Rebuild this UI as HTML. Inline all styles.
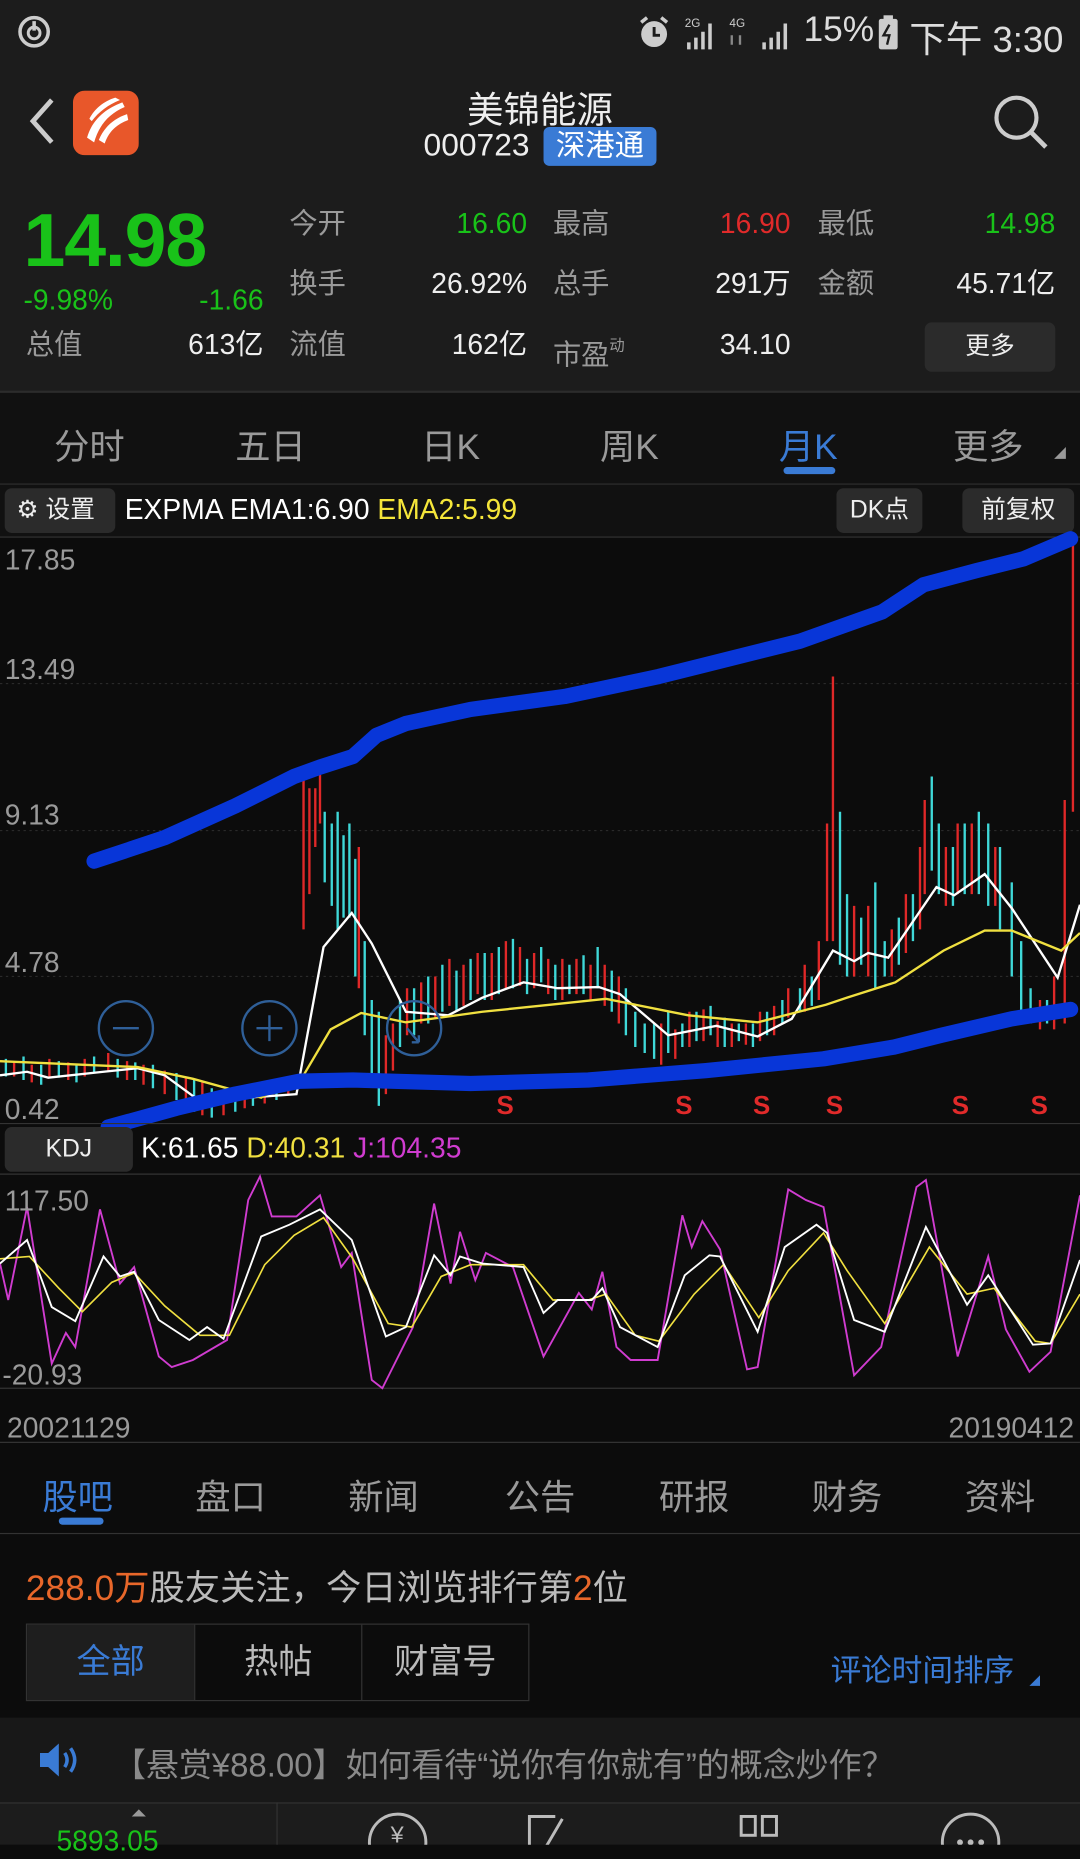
<!DOCTYPE html>
<html><head><meta charset="utf-8">
<style>
*{margin:0;padding:0;box-sizing:border-box}
html,body{width:1080px;height:1844px;overflow:hidden;background:#0c0c0c}
#w{position:absolute;left:0;top:0;width:918px;height:1568px;transform:scale(1.17647);transform-origin:0 0;font-family:"Liberation Sans","Noto Sans CJK SC",sans-serif;color:#ddd;background:#0c0c0c}
.a{position:absolute;white-space:nowrap}
.g{color:#19c219}.r{color:#e02a2a}.lb{color:#9a9a9a}.wt{color:#eee}
.q{font-size:24px;line-height:28px}
.btn{position:absolute;background:#2b2b2b;border-radius:6px;color:#eee;font-size:21px;text-align:center}
</style></head><body><div id="w">
<div class="a" style="left:0;top:0;width:918px;height:332px;background:#1c1c1c"></div>
<div class="a" style="left:0;top:332px;width:918px;height:2px;background:#2c2c2c"></div>
<svg class="a" style="left:14px;top:12px" width="30" height="30" viewBox="0 0 30 30"><circle cx="15" cy="15" r="12" fill="none" stroke="#ccc" stroke-width="3"/><circle cx="15" cy="16" r="5" fill="none" stroke="#ccc" stroke-width="2.5"/><path d="M15 6v8" stroke="#ccc" stroke-width="3"/></svg>
<svg class="a" style="left:540px;top:12px" width="140" height="32" viewBox="0 0 140 32"><circle cx="16" cy="17" r="11" fill="#ccc"/><path d="M16 11v7h5" stroke="#1c1c1c" stroke-width="2.5" fill="none"/><path d="M5 7l5-4M27 7l-5-4" stroke="#ccc" stroke-width="3"/><text x="42" y="11" font-size="10" fill="#ccc" font-family="Liberation Sans">2G</text><path d="M44 30h3v-6h-3zM50 30h3v-10h-3zM56 30h3v-15h-3zM62 30h3v-22h-3z" fill="#ccc"/><text x="80" y="11" font-size="10" fill="#ccc" font-family="Liberation Sans">4G</text><path d="M82 18v8M89 18v8" stroke="#888" stroke-width="2"/><path d="M108 30h3v-6h-3zM114 30h3v-10h-3zM120 30h3v-15h-3zM126 30h3v-22h-3z" fill="#ccc"/></svg>
<div class="a" style="left:683px;top:9px;font-size:30px;color:#ddd">15%</div>
<svg class="a" style="left:745px;top:12px" width="20" height="32"><rect x="2" y="4" width="16" height="26" rx="2" fill="#ccc"/><rect x="6" y="1" width="8" height="4" fill="#ccc"/><path d="M11 9l-5 9h5l-2 8" stroke="#1c1c1c" stroke-width="2" fill="none"/></svg>
<div class="a" style="left:773px;top:8px;font-size:31px;color:#ddd">下午 3:30</div>
<svg class="a" style="left:20px;top:82px" width="30" height="42"><path d="M24 3L8 21l16 18" stroke="#ccc" stroke-width="4" fill="none"/></svg>
<svg class="a" style="left:62px;top:77px" width="56" height="55" viewBox="0 0 56 55"><rect width="56" height="55" rx="10" fill="#e8572a"/><path d="M12 40C16 26 26 16 42 10L44 14C30 20 22 30 18 44Z" fill="#fff"/><path d="M22 42C26 32 34 24 46 20L47 25C36 29 30 36 27 45Z" fill="#fff"/><path d="M16 26C22 18 30 12 40 8L36 6C26 9 18 16 14 24Z" fill="#fff"/></svg>
<div class="a wt" style="left:0;width:918px;text-align:center;top:68px;font-size:31px">美锦能源</div>
<div class="a wt" style="left:360px;top:108px;font-size:27px">000723</div>
<div class="a" style="left:462px;top:108px;width:96px;height:33px;background:#3a7bd5;border-radius:5px;color:#fff;font-size:25px;text-align:center;line-height:33px">深港通</div>
<svg class="a" style="left:842px;top:78px" width="52" height="52"><circle cx="22" cy="22" r="17" fill="none" stroke="#ccc" stroke-width="3.5"/><path d="M34 34l13 13" stroke="#ccc" stroke-width="4"/></svg>
<div class="a g" style="left:20px;top:167px;font-size:64px;font-weight:bold;letter-spacing:-1px">14.98</div>
<div class="a g q" style="left:20px;top:242px">-9.98%</div>
<div class="a g q" style="left:100px;width:124px;text-align:right;top:242px">-1.66</div>
<div class="a lb q" style="left:22px;top:280px">总值</div>
<div class="a wt q" style="left:100px;width:124px;text-align:right;top:280px">613亿</div>
<div class="a lb q" style="left:246px;top:177px">今开</div><div class="a g q" style="left:300px;width:148px;text-align:right;top:177px">16.60</div>
<div class="a lb q" style="left:470px;top:177px">最高</div><div class="a r q" style="left:530px;width:142px;text-align:right;top:177px">16.90</div>
<div class="a lb q" style="left:695px;top:177px">最低</div><div class="a g q" style="left:750px;width:147px;text-align:right;top:177px">14.98</div>
<div class="a lb q" style="left:246px;top:228px">换手</div><div class="a wt q" style="left:300px;width:148px;text-align:right;top:228px">26.92%</div>
<div class="a lb q" style="left:470px;top:228px">总手</div><div class="a wt q" style="left:530px;width:142px;text-align:right;top:228px">291万</div>
<div class="a lb q" style="left:695px;top:228px">金额</div><div class="a wt q" style="left:750px;width:147px;text-align:right;top:228px">45.71亿</div>
<div class="a lb q" style="left:246px;top:280px">流值</div><div class="a wt q" style="left:300px;width:148px;text-align:right;top:280px">162亿</div>
<div class="a lb q" style="left:470px;top:280px">市盈<sup style="font-size:13px;vertical-align:12px">动</sup></div><div class="a wt q" style="left:530px;width:142px;text-align:right;top:280px">34.10</div>
<div class="btn" style="left:786px;top:274px;width:111px;height:42px;line-height:42px">更多</div>
<div class="a" style="left:0;top:334px;width:918px;height:78px;background:#111"></div>
<div class="a" style="left:0;top:411px;width:918px;height:1px;background:#333"></div>
<div class="a lb" style="left:46px;top:355px;font-size:30px">分时</div>
<div class="a lb" style="left:200px;top:355px;font-size:30px">五日</div>
<div class="a lb" style="left:358px;top:355px;font-size:30px">日K</div>
<div class="a lb" style="left:510px;top:355px;font-size:30px">周K</div>
<div class="a" style="left:662px;top:355px;font-size:30px;color:#3a7bd5">月K</div>
<div class="a" style="left:666px;top:397px;width:44px;height:6px;border-radius:3px;background:#3a7bd5"></div>
<div class="a lb" style="left:810px;top:355px;font-size:30px">更多</div>
<div class="a" style="left:896px;top:380px;width:0;height:0;border-left:10px solid transparent;border-bottom:10px solid #999"></div>
<div class="a" style="left:0;top:412px;width:918px;height:44px;background:#111"></div>
<div class="btn" style="left:4px;top:415px;width:94px;height:38px;line-height:38px;text-align:left;padding-left:10px">⚙ 设置</div>
<div class="a" style="left:106px;top:420px;font-size:24px;color:#fff">EXPMA EMA1:6.90 <span style="color:#f5e63a">EMA2:5.99</span></div>
<div class="btn" style="left:711px;top:415px;width:73px;height:38px;line-height:38px">DK点</div>
<div class="btn" style="left:818px;top:415px;width:95px;height:38px;line-height:38px">前复权</div>
<div class="a" style="left:0;top:456px;width:918px;height:1px;background:#333"></div>
<svg class="a" style="left:0;top:0" width="918" height="1568">
<g stroke="#2a2a2a" stroke-dasharray="2 3" stroke-width="1"><path d="M0 581H918M0 706H918M0 830H918"/></g>
<g stroke="#3fd8d8" stroke-width="2" fill="none"><path d="M5 900V915M20 898V918M35 905V922M50 902V916M65 905V920M80 898V912M100 900V916M115 903V918M130 905V925M150 912V935M165 918V945M180 925V950M200 930V945M215 928V940M235 922V935M276 690V750M282 700V770M287 690V790M292 710V780M297 700V780M302 730V830M310 800V880M316 850V920M322 860V940M340 850V890M352 840V880M364 830V870M376 820V860M388 825V860M400 815V850M412 810V850M424 805V845M436 798V840M448 815V845M460 805V835M472 820V850M484 820V845M496 812V845M508 805V840M520 825V860M532 840V880M540 860V890M548 870V895M556 870V900M568 860V895M580 870V890M592 860V885M604 855V880M616 865V890M628 870V885M640 870V890M652 860V880M665 850V870M680 840V860M690 830V855M714 690V820M720 760V830M732 780V820M744 750V840M752 800V830M764 780V820M776 760V800M792 660V740M798 700V760M810 720V770M820 700V760M832 690V760M840 700V770M850 720V790M860 750V830M868 800V860M876 840V870M890 850V870"/></g>
<g stroke="#e02828" stroke-width="2" fill="none"><path d="M12 902V915M27 905V920M42 900V915M58 903V918M72 900V915M92 895V910M108 902V918M122 905V922M140 910V930M158 915V940M172 920V948M190 930V948M208 930V942M225 925V938M245 920V930M258 660V790M263 670V760M268 670V720M272 650V700M305 720V840M328 880V930M334 870V910M346 840V880M358 835V870M370 830V865M382 815V855M394 820V855M406 810V845M418 810V850M430 800V840M442 805V838M454 810V840M466 815V845M478 815V850M490 815V845M502 820V850M514 820V855M526 830V870M562 870V905M574 875V900M586 860V890M598 858V885M610 868V890M622 870V890M634 870V888M646 860V885M658 855V880M670 840V865M684 820V860M696 800V850M703 700V800M708 575V800M726 770V830M738 770V830M758 790V830M770 760V810M782 720V790M786 680V760M804 720V770M814 700V760M826 700V760M846 720V770M884 850V875M896 830V875M905 680V870M912 460V690"/></g>
<polyline fill="none" stroke="#fff" stroke-width="2" points="0,914 23,911 41,916 88,911 117,908 140,914 170,936 252,930 275,805 299,776 316,802 345,860 381,863 410,848 445,835 474,840 509,839 527,845 568,880 609,872 644,881 673,866 708,808 726,817 738,810 755,814 796,754 811,761 837,743 860,772 899,831 918,769"/>
<polyline fill="none" stroke="#f0e040" stroke-width="2" points="0,902 117,907 164,917 222,933 258,914 281,875 307,861 345,869 410,860 468,854 515,849 585,863 644,869 702,854 720,848 761,835 802,808 837,791 860,791 902,808 918,793"/>
<polyline fill="none" stroke="#0836d8" stroke-width="13" stroke-linecap="round" stroke-linejoin="round" points="80,732 140,712 200,685 250,660 272,652 300,643 320,625 345,615 400,603 480,592 560,575 600,565 680,545 750,520 785,497 830,485 870,475 910,458"/>
<polyline fill="none" stroke="#0836d8" stroke-width="13" stroke-linecap="round" stroke-linejoin="round" points="92,958 150,942 200,930 255,919 300,918 400,921 500,918 600,910 700,900 760,890 800,880 860,866 910,858"/>
<g fill="none" stroke="#2f5f98" stroke-width="2"><circle cx="107" cy="874" r="23"/><circle cx="229" cy="874" r="23"/><circle cx="352" cy="874" r="23"/><path d="M96 874H118M218 874H240M229 863V885M346 874l10 12M356 886h-6M356 886v-6"/></g>
<g fill="#e02a2a" font-size="22" font-weight="bold" font-family="Liberation Sans"><text x="422" y="947">S</text><text x="574" y="947">S</text><text x="640" y="947">S</text><text x="702" y="947">S</text><text x="809" y="947">S</text><text x="876" y="947">S</text></g>
<g fill="#9a9a9a" font-size="24" font-family="Liberation Sans"><text x="4" y="484">17.85</text><text x="4" y="577">13.49</text><text x="4" y="701">9.13</text><text x="4" y="826">4.78</text><text x="4" y="951">0.42</text></g>
<path d="M0 955H918M0 998H918M0 1180H918M0 1226H918" stroke="#333" stroke-width="1"/>
<polyline fill="none" stroke="#d03cd0" stroke-width="1.6" points="0,1074 7,1105 23,1026 44,1159 56,1133 64,1145 85,1028 102,1091 114,1077 135,1153 146,1162 164,1156 193,1139 211,1020 221,1000 231,1034 252,1034 272,1016 290,1077 299,1065 316,1173 325,1180 351,1128 369,1023 383,1091 391,1047 404,1088 413,1065 436,1077 462,1153 492,1099 503,1113 512,1081 524,1145 536,1156 559,1156 580,1033 588,1060 597,1038 612,1062 635,1164 644,1162 670,1011 685,1020 700,1026 726,1169 749,1145 779,1009 787,1003 814,1153 840,1068 855,1130 875,1166 893,1149 918,1016"/>
<polyline fill="none" stroke="#f0e040" stroke-width="1.4" points="0,1070 25,1068 50,1095 70,1115 95,1090 114,1082 140,1110 170,1135 195,1135 225,1075 250,1050 275,1035 300,1070 330,1125 350,1128 375,1085 400,1075 445,1075 470,1105 500,1105 515,1100 540,1135 560,1140 590,1100 615,1075 645,1120 670,1080 700,1048 720,1080 752,1125 790,1060 822,1100 845,1095 880,1140 893,1142 918,1100"/>
<polyline fill="none" stroke="#fff" stroke-width="1.6" points="0,1074 23,1054 44,1111 64,1123 88,1068 102,1085 114,1081 135,1122 161,1139 176,1128 190,1138 222,1051 246,1041 272,1028 299,1054 328,1136 345,1128 369,1067 383,1084 391,1068 410,1074 445,1077 462,1116 474,1105 503,1105 512,1095 527,1128 559,1145 582,1084 603,1067 612,1068 644,1132 667,1060 694,1041 703,1048 726,1122 752,1132 787,1043 822,1109 840,1084 878,1143 893,1142 918,1071"/>
<g fill="#9a9a9a" font-size="24" font-family="Liberation Sans"><text x="4" y="1029">117.50</text><text x="2" y="1177">-20.93</text><text x="6" y="1222">20021129</text><text x="913" y="1222" text-anchor="end">20190412</text></g>
</svg>
<div class="btn" style="left:4px;top:958px;width:109px;height:38px;line-height:38px">KDJ</div>
<div class="a" style="left:120px;top:963px;font-size:24px;color:#fff">K:61.65 <span style="color:#f0e040">D:40.31</span> <span style="color:#d03cd0">J:104.35</span></div>
<div class="a" style="left:0;top:1303px;width:918px;height:1px;background:#333"></div>
<div class="a" style="left:36px;top:1248px;font-size:30px;color:#3a7bd5">股吧</div>
<div class="a" style="left:50px;top:1290px;width:38px;height:6px;border-radius:3px;background:#3a7bd5"></div>
<div class="a lb" style="left:166px;top:1248px;font-size:30px">盘口</div>
<div class="a lb" style="left:296px;top:1248px;font-size:30px">新闻</div>
<div class="a lb" style="left:429px;top:1248px;font-size:30px">公告</div>
<div class="a lb" style="left:560px;top:1248px;font-size:30px">研报</div>
<div class="a lb" style="left:690px;top:1248px;font-size:30px">财务</div>
<div class="a lb" style="left:820px;top:1248px;font-size:30px">资料</div>
<div class="a" style="left:22px;top:1325px;font-size:30px;color:#bbb"><span style="color:#e8672a">288.0万</span>股友关注，今日浏览排行第<span style="color:#e8672a">2</span>位</div>
<div class="a" style="left:22px;top:1380px;width:428px;height:66px;border:1px solid #333"></div>
<div class="a" style="left:23px;top:1381px;width:142px;height:64px;background:#1e1e1e;color:#3a7bd5;font-size:29px;text-align:center;line-height:64px">全部</div>
<div class="a" style="left:165px;top:1381px;width:142px;height:64px;border-left:1px solid #333;color:#bbb;font-size:29px;text-align:center;line-height:64px">热帖</div>
<div class="a" style="left:307px;top:1381px;width:142px;height:64px;border-left:1px solid #333;color:#bbb;font-size:29px;text-align:center;line-height:64px">财富号</div>
<div class="a" style="left:706px;top:1400px;font-size:26px;color:#3a7bd5">评论时间排序</div>
<div class="a" style="left:875px;top:1424px;width:0;height:0;border-left:9px solid transparent;border-bottom:9px solid #3a7bd5"></div>
<div class="a" style="left:0;top:1460px;width:918px;height:72px;background:#181818"></div>
<svg class="a" style="left:32px;top:1480px" width="36" height="32"><path d="M2 10h7l9-8v28l-9-8H2z" fill="#3a7bd5"/><path d="M23 10q4 6 0 12M28 6q7 10 0 20" stroke="#3a7bd5" stroke-width="3" fill="none"/></svg>
<div class="a" style="left:96px;top:1479px;font-size:28px;color:#8a8a8a">【悬赏¥88.00】如何看待“说你有你就有”的概念炒作？</div>
<div class="a" style="left:0;top:1532px;width:918px;height:36px;background:#1c1c1c"></div>
<div class="a" style="left:0;top:1532px;width:918px;height:1px;background:#333"></div>
<div class="a" style="left:235px;top:1532px;width:1px;height:36px;background:#333"></div>
<div class="a" style="left:112px;top:1538px;width:0;height:0;border-left:6px solid transparent;border-right:6px solid transparent;border-bottom:6px solid #999"></div>
<div class="a" style="left:48px;top:1552px;font-size:24px;color:#19c219">5893.05</div>
<svg class="a" style="left:0;top:1532px" width="918" height="36"><g fill="none" stroke="#bbb" stroke-width="2.5"><circle cx="338" cy="34" r="24"/><path d="M450 40V12h22M478 14l-14 24"/><rect x="630" y="12" width="12" height="16"/><rect x="648" y="12" width="12" height="16"/><circle cx="825" cy="34" r="24"/></g><g fill="#bbb"><circle cx="816" cy="34" r="2.5"/><circle cx="825" cy="34" r="2.5"/><circle cx="834" cy="34" r="2.5"/></g><text x="332" y="34" font-size="20" fill="#bbb" font-family="Liberation Sans">¥</text></svg>
</div></body></html>
